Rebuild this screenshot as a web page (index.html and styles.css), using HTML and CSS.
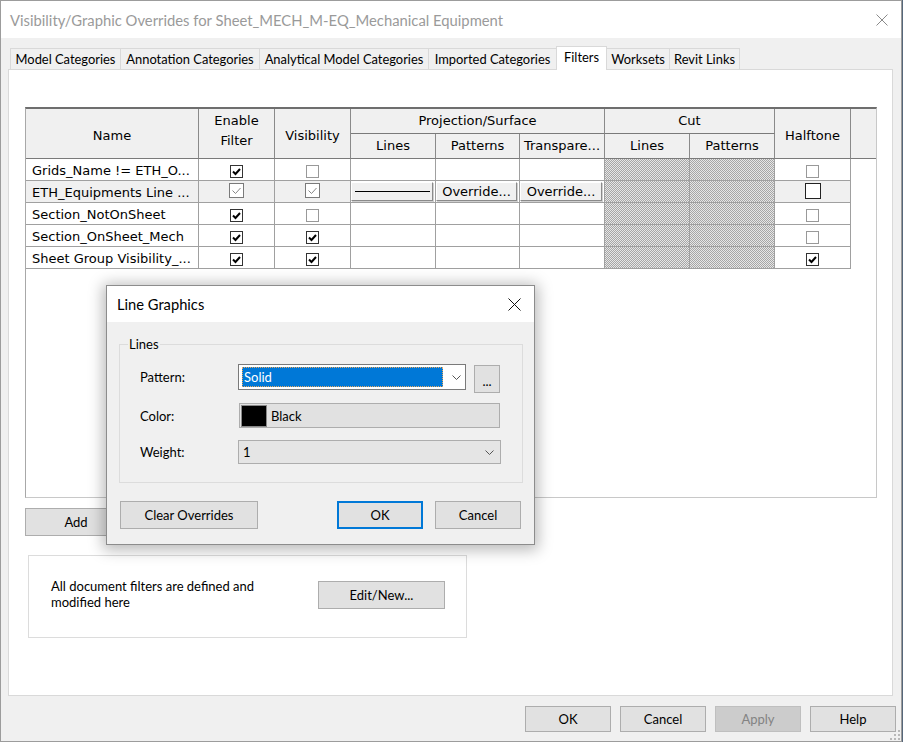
FILE: index.html
```html
<!DOCTYPE html>
<html>
<head>
<meta charset="utf-8">
<title>Visibility/Graphic Overrides</title>
<link rel="stylesheet" href="styles.css">
</head>
<body>
<div class="win">
  <div class="titlebar">
    <span class="title">Visibility/Graphic Overrides for Sheet_MECH_M-EQ_Mechanical Equipment</span>
    <svg class="close" width="12" height="12" viewBox="0 0 12 12"><path d="M0.5 0.5 L11.5 11.5 M11.5 0.5 L0.5 11.5" stroke="#8a8a8a" stroke-width="1" fill="none"/></svg>
  </div>
  <div class="client">
    <div class="tabs">
      <div class="tab w1">Model Categories</div>
      <div class="tab w2">Annotation Categories</div>
      <div class="tab w3">Analytical Model Categories</div>
      <div class="tab w4">Imported Categories</div>
      <div class="tab sel w5">Filters</div>
      <div class="tab w6">Worksets</div>
      <div class="tab w7">Revit Links</div>
    </div>
    <div class="panel">
      <div class="list">
        <div class="grid">
          <div class="h hr2 down">Name</div>
          <div class="h hr2 up">Enable<br>Filter</div>
          <div class="h hr2 down">Visibility</div>
          <div class="h hs3">Projection/Surface</div>
          <div class="h hs2">Cut</div>
          <div class="h hr2 down">Halftone</div>
          <div class="h hr2 hfill"></div>
          <div class="h">Lines</div>
          <div class="h">Patterns</div>
          <div class="h">Transpare...</div>
          <div class="h">Lines</div>
          <div class="h">Patterns</div>

          <div class="d name">Grids_Name != ETH_O...</div>
          <div class="d ck"><span class="cb on"><svg viewBox="0 0 11 11"><path d="M2 5.5 L4.5 8 L9 3" /></svg></span></div>
          <div class="d ck"><span class="cb off"></span></div>
          <div class="d"></div>
          <div class="d"></div>
          <div class="d"></div>
          <div class="d cut"></div>
          <div class="d cut"></div>
          <div class="d ck"><span class="cb off"></span></div>
          <div class="fill"></div>

          <div class="d name sel">ETH_Equipments Line ...</div>
          <div class="d ck sel ck2"><span class="cb dis"><svg viewBox="0 0 13 13"><path d="M2.5 6.5 L5.5 9.5 L10.5 4" /></svg></span></div>
          <div class="d ck sel ck2"><span class="cb dis"><svg viewBox="0 0 13 13"><path d="M2.5 6.5 L5.5 9.5 L10.5 4" /></svg></span></div>
          <div class="d bcell"><span class="gbtn"><span class="gline"></span></span></div>
          <div class="d bcell"><span class="gbtn">Override...</span></div>
          <div class="d bcell"><span class="gbtn">Override...</span></div>
          <div class="d cut"></div>
          <div class="d cut"></div>
          <div class="d ck sel ck2"><span class="cb big"></span></div>
          <div class="fill"></div>

          <div class="d name">Section_NotOnSheet</div>
          <div class="d ck"><span class="cb on"><svg viewBox="0 0 11 11"><path d="M2 5.5 L4.5 8 L9 3" /></svg></span></div>
          <div class="d ck"><span class="cb off"></span></div>
          <div class="d"></div>
          <div class="d"></div>
          <div class="d"></div>
          <div class="d cut"></div>
          <div class="d cut"></div>
          <div class="d ck"><span class="cb off"></span></div>
          <div class="fill"></div>

          <div class="d name">Section_OnSheet_Mech</div>
          <div class="d ck"><span class="cb on"><svg viewBox="0 0 11 11"><path d="M2 5.5 L4.5 8 L9 3" /></svg></span></div>
          <div class="d ck"><span class="cb on"><svg viewBox="0 0 11 11"><path d="M2 5.5 L4.5 8 L9 3" /></svg></span></div>
          <div class="d"></div>
          <div class="d"></div>
          <div class="d"></div>
          <div class="d cut"></div>
          <div class="d cut"></div>
          <div class="d ck"><span class="cb off"></span></div>
          <div class="fill"></div>

          <div class="d name">Sheet Group Visibility_...</div>
          <div class="d ck"><span class="cb on"><svg viewBox="0 0 11 11"><path d="M2 5.5 L4.5 8 L9 3" /></svg></span></div>
          <div class="d ck"><span class="cb on"><svg viewBox="0 0 11 11"><path d="M2 5.5 L4.5 8 L9 3" /></svg></span></div>
          <div class="d"></div>
          <div class="d"></div>
          <div class="d"></div>
          <div class="d cut"></div>
          <div class="d cut"></div>
          <div class="d ck"><span class="cb on"><svg viewBox="0 0 11 11"><path d="M2 5.5 L4.5 8 L9 3" /></svg></span></div>
          <div class="fill"></div>
        </div>
      </div>
      <button class="btn add">Add</button>
      <div class="info">
        <div class="info-text">All document filters are defined and<br>modified here</div>
        <button class="btn editnew">Edit/New...</button>
      </div>
    </div>
    <div class="footer">
      <button class="btn fbtn">OK</button>
      <button class="btn fbtn">Cancel</button>
      <button class="btn fbtn disabled">Apply</button>
      <button class="btn fbtn">Help</button>
    </div>
    <svg class="grip" width="10" height="10" viewBox="0 0 10 10">
      <rect x="8" y="0" width="2" height="2" fill="#b8b8b8"/>
      <rect x="4" y="4" width="2" height="2" fill="#b8b8b8"/>
      <rect x="8" y="4" width="2" height="2" fill="#b8b8b8"/>
      <rect x="0" y="8" width="2" height="2" fill="#b8b8b8"/>
      <rect x="4" y="8" width="2" height="2" fill="#b8b8b8"/>
      <rect x="8" y="8" width="2" height="2" fill="#b8b8b8"/>
    </svg>
  </div>

  <div class="dlg">
    <div class="dlg-title">
      <span class="dlg-name">Line Graphics</span>
      <svg class="dlg-close" width="13" height="13" viewBox="0 0 13 13"><path d="M0.5 0.5 L12.5 12.5 M12.5 0.5 L0.5 12.5" stroke="#111" stroke-width="1" fill="none"/></svg>
    </div>
    <div class="dlg-body">
      <div class="group">
        <span class="legend">Lines</span>
        <div class="prow prow1">
          <span class="lbl">Pattern:</span>
          <div class="select">
            <span class="selval">Solid</span>
            <svg class="chev" width="9" height="5" viewBox="0 0 9 5"><path d="M0.5 0.5 L4.5 4.5 L8.5 0.5" fill="none" stroke="#555"/></svg>
          </div>
          <button class="btn dots">...</button>
        </div>
        <div class="prow prow2">
          <span class="lbl">Color:</span>
          <button class="btn colorbtn"><span class="swatch"></span><span>Black</span></button>
        </div>
        <div class="prow prow3">
          <span class="lbl">Weight:</span>
          <div class="combo">
            <span>1</span>
            <svg class="chev" width="9" height="5" viewBox="0 0 9 5"><path d="M0.5 0.5 L4.5 4.5 L8.5 0.5" fill="none" stroke="#555"/></svg>
          </div>
        </div>
      </div>
      <div class="dlg-btns">
        <button class="btn clear">Clear Overrides</button>
        <button class="btn def okd">OK</button>
        <button class="btn canceld">Cancel</button>
      </div>
    </div>
  </div>
</div>
</body>
</html>
```

FILE: styles.css
```css
* { box-sizing: border-box; }
html, body { margin: 0; padding: 0; }
body {
  width: 903px;
  height: 742px;
  overflow: hidden;
  background: #56677a;
  font-family: Lato, "Liberation Sans", sans-serif;
  font-size: 13px;
  color: #000;
}
button { font: inherit; color: inherit; margin: 0; padding: 0; }

.win {
  position: relative;
  width: 902px;
  height: 742px;
  border: 1px solid #9c9c9c;
  background: #f0f0f0;
  display: flex;
  flex-direction: column;
}

.titlebar {
  flex: none;
  height: 37px;
  background: #fff;
  display: flex;
  align-items: center;
  justify-content: space-between;
  padding: 0 13px 0 9px;
}
.title { color: #9a9a9a; font-size: 14.8px; padding-top: 1px; white-space: nowrap; }
.close { display: block; }

.client {
  flex: 1;
  position: relative;
  display: flex;
  flex-direction: column;
  padding: 8px 0 0 7px;
}

.tabs {
  display: flex;
  align-items: flex-end;
  height: 23px;
  margin-left: 2px;
  position: relative;
  z-index: 1;
  font-size: 12.9px;
}
.tab {
  height: 21px;
  border: 1px solid #d9d9d9;
  border-bottom: none;
  background: #f0f0f0;
  margin-right: -1px;
  display: flex;
  align-items: center;
  justify-content: center;
  white-space: nowrap;
}
.tab.sel {
  height: 24px;
  background: #fff;
  margin-bottom: -1px;
  padding-bottom: 4px;
  position: relative;
  z-index: 2;
}
.w1 { width: 111px; }
.w2 { width: 140px; }
.w3 { width: 170px; }
.w4 { width: 129px; }
.w5 { width: 51px; }
.w6 { width: 64px; }
.w7 { width: 71px; }

.panel {
  width: 885px;
  height: 627px;
  background: #fff;
  border: 1px solid #d9d9d9;
  padding: 37px 0 0 16px;
  display: flex;
  flex-direction: column;
  align-items: flex-start;
}

.list {
  width: 852px;
  height: 391px;
  border: 1px solid #c8c8c8;
  border-left-color: #a8a8a8;
  border-top: 2px solid #6e6e6e;
  background: #fff;
}
.grid {
  display: grid;
  grid-template-columns: 173px 76px 76px 85px 84px 85px 85px 85px 76px 1fr;
  grid-template-rows: 25px 25px 22px 22px 22px 22px 22px;
  font-family: "DejaVu Sans", Verdana, sans-serif;
  font-size: 13px;
}
.h {
  background: #f0f0f0;
  border-right: 1px solid #8a8a8a;
  border-bottom: 1px solid #7a7a7a;
  display: flex;
  align-items: center;
  justify-content: center;
  text-align: center;
  line-height: 20px;
  white-space: nowrap;
}
.h.hr2 { grid-row: span 2; }
.h.hs3 { grid-column: span 3; }
.h.hs2 { grid-column: span 2; }
.h.down { padding-top: 4px; }
.h.up { padding-bottom: 6px; }
.h.hfill { border-right: none; }

.d {
  border-right: 1px solid #a0a0a0;
  border-bottom: 1px solid #a0a0a0;
  white-space: nowrap;
  overflow: hidden;
}
.d.name { padding: 2px 0 0 6px; line-height: 19px; }
.d.sel { background: #f0f0f0; }
.d.ck { display: flex; justify-content: center; align-items: flex-start; padding-top: 6px; }
.d.ck2 { padding-top: 2px; }
.d.cut {
  background: repeating-conic-gradient(#a6a6a6 0 25%, #e6e6e6 0 50%) 0 0 / 2px 2px;
}
.fill { background: #fff; }

.cb {
  width: 13px;
  height: 13px;
  border: 1px solid #333;
  background: #fff;
  display: block;
}
.cb svg { display: block; width: 11px; height: 11px; }
.cb.on svg path { fill: none; stroke: #000; stroke-width: 2; }
.cb.off { border-color: #999; }
.cb.dis { width: 15px; height: 15px; border-color: #7a7a7a; }
.cb.dis svg { width: 13px; height: 13px; }
.cb.dis svg path { fill: none; stroke: #858585; stroke-width: 1; }
.cb.big { width: 16px; height: 16px; border-color: #222; }

.bcell { padding: 1px 2px 1px 0; background: #fff; }
.gbtn {
  display: flex;
  align-items: center;
  justify-content: center;
  height: 100%;
  background: #f0f0f0;
  border: 1px solid;
  border-color: #fff #8a8a8a #8a8a8a #fff;
  box-shadow: 1px 1px 0 #cfcfcf;
  line-height: 18px;
}
.gline { display: block; width: 75px; height: 1px; background: #000; }

.btn {
  background: #e1e1e1;
  border: 1px solid #adadad;
  display: flex;
  align-items: center;
  justify-content: center;
  white-space: nowrap;
  cursor: default;
}
.add { width: 102px; height: 28px; margin-top: 10px; }

.info {
  margin: 19px 0 0 3px;
  width: 439px;
  height: 83px;
  border: 1px solid #dcdcdc;
  background: #fff;
  display: grid;
  grid-template-columns: 267px 127px;
  align-items: center;
  padding: 0 0 4px 22px;
}
.info-text { line-height: 15.5px; }
.editnew { height: 28px; }

.footer {
  display: flex;
  justify-content: flex-end;
  gap: 9px;
  margin-top: 10px;
  padding-right: 5px;
}
.fbtn { width: 86px; height: 26px; }
.fbtn.disabled { background: #cccccc; border-color: #bfbfbf; color: #838383; }

.grip { position: absolute; right: 1px; bottom: 1px; display: block; }

/* Dialog */
.dlg {
  position: absolute;
  left: 105px;
  top: 284px;
  width: 429px;
  height: 260px;
  background: #f0f0f0;
  border: 1px solid #8c8c8c;
  box-shadow: 0 2px 14px 3px rgba(0, 0, 0, 0.28);
  display: flex;
  flex-direction: column;
  z-index: 10;
}
.dlg-title {
  flex: none;
  height: 36px;
  background: #fff;
  display: flex;
  align-items: center;
  justify-content: space-between;
  padding: 0 13px 0 10px;
}
.dlg-name { font-size: 14.7px; padding-bottom: 1px; }
.dlg-close { display: block; }

.dlg-body { padding: 22px 11px 0 12px; }
.group {
  position: relative;
  width: 404px;
  height: 139px;
  border: 1px solid #dcdcdc;
  padding: 19px 0 0 20px;
}
.legend {
  position: absolute;
  left: 8px;
  top: -9px;
  line-height: 16px;
  padding: 0 1px;
  background: #f0f0f0;
}
.prow { display: flex; align-items: flex-start; }
.prow1 { height: 29px; margin-bottom: 10px; }
.prow2 { height: 25px; margin-bottom: 12px; }
.prow3 { height: 24px; }
.lbl { width: 98px; flex: none; display: flex; align-items: center; align-self: stretch; }
.prow1 .lbl { height: 26px; align-self: flex-start; }

.select {
  width: 228px;
  height: 26px;
  border: 1px solid #7a7a7a;
  background: #fff;
  display: flex;
  align-items: center;
  padding-left: 3px;
}
.selval {
  width: 201px;
  height: 20px;
  background: #0078d7;
  color: #fff;
  border: 1px dotted #e8a860;
  line-height: 18px;
  padding-left: 1px;
}
.select .chev { margin-left: 9px; display: block; }
.dots { width: 26px; height: 28px; margin: 1px 0 0 8px; padding-top: 4px; }
.colorbtn {
  width: 261px;
  height: 25px;
  margin-left: 1px;
  justify-content: flex-start;
  padding-left: 1px;
}
.swatch {
  width: 26px;
  height: 22px;
  background: #000;
  border: 1px solid #888;
  margin-right: 4px;
  display: block;
}
.combo {
  width: 263px;
  height: 24px;
  background: #e5e5e5;
  border: 1px solid #adadad;
  display: flex;
  align-items: center;
  justify-content: space-between;
  padding: 0 6px 0 4px;
}
.combo .chev { display: block; }

.dlg-btns { display: flex; margin-top: 18px; padding-left: 1px; }
.dlg-btns .btn { height: 28px; }
.clear { width: 138px; }
.okd { width: 86px; margin-left: 79px; }
.def { border: 2px solid #0078d7; }
.canceld { width: 86px; margin-left: 12px; }
```
